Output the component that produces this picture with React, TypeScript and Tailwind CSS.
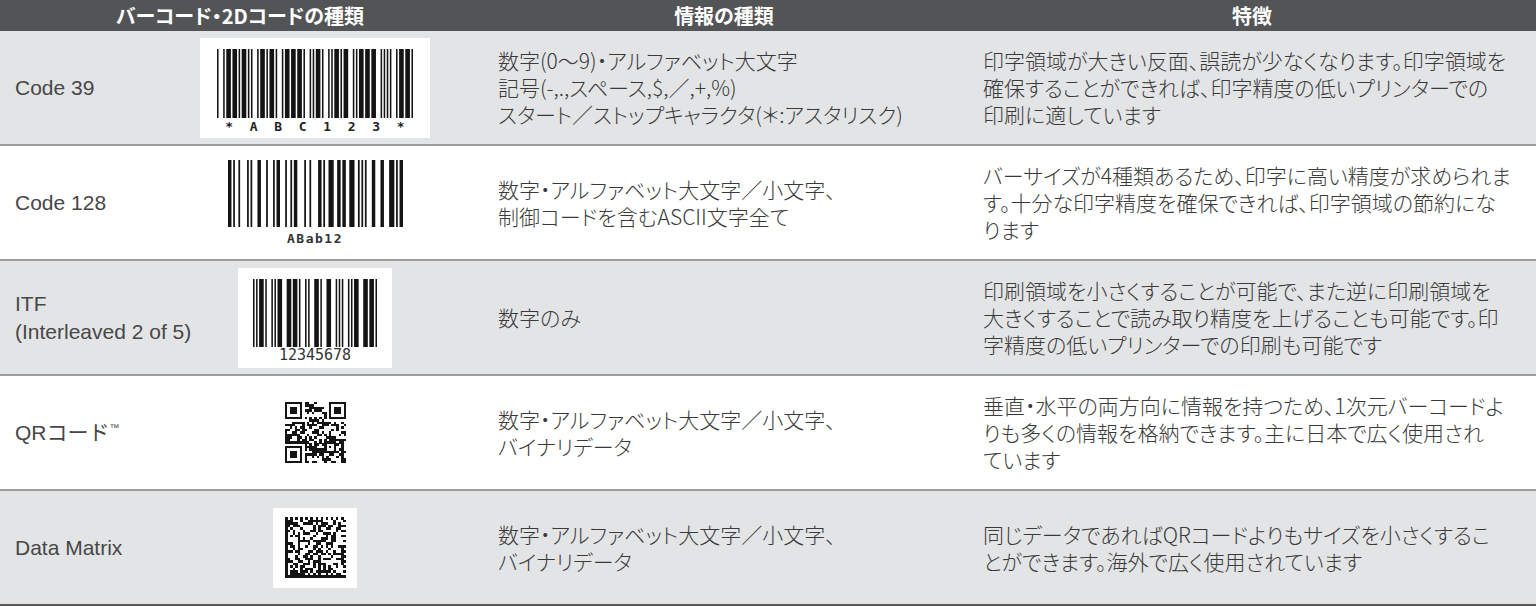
import React from "react";

const JP = "font-['Noto_Sans_CJK_JP',sans-serif] [font-feature-settings:'palt']";
const LABEL = "font-['Liberation_Sans','Noto_Sans_CJK_JP',sans-serif]";
const MONO = "font-['DejaVu_Sans_Mono',monospace]";

type Bar = { x: number; w: number };

// code 39: 1 = wide element, bar/space alternating, starting with a bar
const C39: Record<string, string> = {
  "*": "010010100",
  A: "100001001",
  B: "001001001",
  C: "101001000",
  "1": "100100001",
  "2": "001100001",
  "3": "101100000",
};

function code39(text: string) {
  const bars: Bar[] = [];
  let x = 0;
  text.split("").forEach((ch, ci) => {
    const p = C39[ch];
    for (let i = 0; i < 9; i++) {
      const w = p[i] === "1" ? 3 : 1;
      if (i % 2 === 0) bars.push({ x, w });
      x += w;
    }
    if (ci < text.length - 1) x += 1;
  });
  return { bars, total: x };
}

// code 128 set B: start, A, B, a, b, 1, 2, checksum(33), stop
const C128 = ["211214", "111323", "131123", "121124", "121421", "123221", "223211", "111323", "2331112"];

function fromWidths(list: string[]) {
  const bars: Bar[] = [];
  let x = 0;
  list.forEach((p) => {
    for (let i = 0; i < p.length; i++) {
      const w = Number(p[i]);
      if (i % 2 === 0) bars.push({ x, w });
      x += w;
    }
  });
  return { bars, total: x };
}

const ITF_D = ["nnwwn", "wnnnw", "nwnnw", "wwnnn", "nnwnw", "wnwnn", "nwwnn", "nnnww", "wnnwn", "nwnwn"];

function itf(digits: string) {
  const bars: Bar[] = [];
  let x = 0;
  const seq: [number, boolean][] = [];
  [1, 1, 1, 1].forEach((w, i) => seq.push([w, i % 2 === 0]));
  for (let i = 0; i < digits.length; i += 2) {
    const a = ITF_D[Number(digits[i])];
    const b = ITF_D[Number(digits[i + 1])];
    for (let k = 0; k < 5; k++) {
      seq.push([a[k] === "w" ? 3 : 1, true]);
      seq.push([b[k] === "w" ? 3 : 1, false]);
    }
  }
  seq.push([3, true], [1, false], [1, true]);
  seq.forEach(([w, isBar]) => {
    if (isBar) bars.push({ x, w });
    x += w;
  });
  return { bars, total: x };
}

function Bars({ data, w, h }: { data: { bars: Bar[]; total: number }; w: number; h: number }) {
  return (
    <svg width={w} height={h} viewBox={`0 0 ${data.total} 10`} preserveAspectRatio="none" className="block">
      {data.bars.map((b, i) => (
        <rect key={i} x={b.x} y={0} width={b.w} height={10} fill="#141414" />
      ))}
    </svg>
  );
}

function rng(seed: number) {
  let s = seed;
  return () => {
    s |= 0;
    s = (s + 0x6d2b79f5) | 0;
    let t = Math.imul(s ^ (s >>> 15), 1 | s);
    t = (t + Math.imul(t ^ (t >>> 7), 61 | t)) ^ t;
    return ((t ^ (t >>> 14)) >>> 0) / 4294967296;
  };
}

function qrCells() {
  const n = 25;
  const r = rng(7);
  const cells: boolean[][] = [];
  for (let y = 0; y < n; y++) {
    cells.push([]);
    for (let x = 0; x < n; x++) cells[y].push(r() > 0.52);
  }
  const finder = (ox: number, oy: number) => {
    for (let y = -1; y < 8; y++)
      for (let x = -1; x < 8; x++) {
        const cx = ox + x, cy = oy + y;
        if (cx < 0 || cy < 0 || cx >= n || cy >= n) continue;
        const edge = x === 0 || x === 6 || y === 0 || y === 6;
        const core = x >= 2 && x <= 4 && y >= 2 && y <= 4;
        cells[cy][cx] = x >= 0 && x <= 6 && y >= 0 && y <= 6 && (edge || core);
      }
  };
  finder(0, 0);
  finder(n - 7, 0);
  finder(0, n - 7);
  for (let i = 8; i < n - 8; i++) {
    cells[6][i] = i % 2 === 0;
    cells[i][6] = i % 2 === 0;
  }
  for (let y = 16; y < 21; y++)
    for (let x = 16; x < 21; x++) {
      const d = Math.max(Math.abs(x - 18), Math.abs(y - 18));
      cells[y][x] = d !== 1;
    }
  return cells;
}

function dmCells() {
  const n = 24;
  const r = rng(31);
  const cells: boolean[][] = [];
  for (let y = 0; y < n; y++) {
    cells.push([]);
    for (let x = 0; x < n; x++) {
      let v = r() > 0.5;
      if (x === 0 || y === n - 1) v = true;
      else if (y === 0) v = x % 2 === 0;
      else if (x === n - 1) v = y % 2 === 1;
      cells[y].push(v);
    }
  }
  return cells;
}

function Matrix({ cells, size }: { cells: boolean[][]; size: number }) {
  const n = cells.length;
  return (
    <svg width={size} height={size} viewBox={`0 0 ${n} ${n}`} className="block" shapeRendering="crispEdges">
      {cells.flatMap((row, y) =>
        row.map((on, x) => (on ? <rect key={`${x}-${y}`} x={x} y={y} width={1.02} height={1.02} fill="#141414" /> : null))
      )}
    </svg>
  );
}

function Code39Img() {
  const chars = "*ABC123*".split("");
  return (
    <div className="w-[230px] h-[100px] bg-white flex flex-col items-center pt-[11px]">
      <Bars data={code39("*ABC123*")} w={196} h={69} />
      <div className={`w-[196px] flex ${MONO} font-bold text-[13px] leading-[15px] text-[#222] mt-[1px]`}>
        {chars.map((c, i) => (
          <span key={i} className="flex-1 text-center">
            {c}
          </span>
        ))}
      </div>
    </div>
  );
}

function Code128Img() {
  return (
    <div className="flex flex-col items-center">
      <Bars data={fromWidths(C128)} w={175} h={67} />
      <div className={`${MONO} font-bold text-[13px] leading-[15px] tracking-[1.5px] text-[#333] mt-[4px]`}>ABab12</div>
    </div>
  );
}

function ItfImg() {
  return (
    <div className="w-[154px] h-[100px] bg-white flex flex-col items-center pt-[11px]">
      <Bars data={itf("12345678")} w={124} h={68} />
      <div className={`${MONO} text-[15px] leading-[16px] text-[#333]`}>12345678</div>
    </div>
  );
}

type Row = {
  label: React.ReactNode;
  img: React.ReactNode;
  info: string[];
  feat: string[];
  gray: boolean;
};

const rows: Row[] = [
  {
    label: "Code 39",
    img: <Code39Img />,
    info: ["数字(0〜9)・アルファベット大文字", "記号(-,.,スペース,$,／,+,%)", "スタート／ストップキャラクタ(＊:アスタリスク)"],
    feat: [
      "印字領域が大きい反面、誤読が少なくなります。印字領域を",
      "確保することができれば、印字精度の低いプリンターでの",
      "印刷に適しています",
    ],
    gray: true,
  },
  {
    label: "Code 128",
    img: <Code128Img />,
    info: ["数字・アルファベット大文字／小文字、", "制御コードを含むASCII文字全て"],
    feat: [
      "バーサイズが4種類あるため、印字に高い精度が求められま",
      "す。十分な印字精度を確保できれば、印字領域の節約にな",
      "ります",
    ],
    gray: false,
  },
  {
    label: (
      <>
        ITF
        <br />
        (Interleaved 2 of 5)
      </>
    ),
    img: <ItfImg />,
    info: ["数字のみ"],
    feat: [
      "印刷領域を小さくすることが可能で、また逆に印刷領域を",
      "大きくすることで読み取り精度を上げることも可能です。印",
      "字精度の低いプリンターでの印刷も可能です",
    ],
    gray: true,
  },
  {
    label: (
      <>
        QRコード<sup className="text-[10px] -top-[0.9em]">™</sup>
      </>
    ),
    img: <Matrix cells={qrCells()} size={61} />,
    info: ["数字・アルファベット大文字／小文字、", "バイナリデータ"],
    feat: [
      "垂直・水平の両方向に情報を持つため、1次元バーコードよ",
      "りも多くの情報を格納できます。主に日本で広く使用され",
      "ています",
    ],
    gray: false,
  },
  {
    label: "Data Matrix",
    img: (
      <div className="w-[84px] h-[80px] bg-white flex items-center justify-center">
        <Matrix cells={dmCells()} size={61} />
      </div>
    ),
    info: ["数字・アルファベット大文字／小文字、", "バイナリデータ"],
    feat: ["同じデータであればQRコードよりもサイズを小さくするこ", "とができます。海外で広く使用されています"],
    gray: true,
  },
];

export default function App() {
  return (
    <div className="w-[1536px] h-[609px] bg-white overflow-hidden">
      <div className={`grid grid-cols-[480px_488px_1fr] h-[31px] bg-[#535456] text-white font-bold text-[20px] items-center text-center ${JP}`}>
        <div>バーコード・2Dコードの種類</div>
        <div>情報の種類</div>
        <div>特徴</div>
      </div>
      {rows.map((r, i) => (
        <div
          key={i}
          className={`grid grid-cols-[150px_330px_488px_1fr] h-[115px] items-center border-b-2 ${
            i === rows.length - 1 ? "border-[#5a5a5a]" : "border-[#9c9c9c]"
          } ${r.gray ? "bg-[#e3e4e6]" : "bg-white"}`}
        >
          <div className={`pl-[15px] text-[21px] leading-[28px] text-[#474747] whitespace-nowrap ${LABEL}`}>{r.label}</div>
          <div className="flex justify-center">{r.img}</div>
          <div className={`pl-[18px] text-[21px] leading-[27px] font-light text-[#3a3a3a] whitespace-nowrap ${JP}`}>
            {r.info.map((t, k) => (
              <div key={k}>{t}</div>
            ))}
          </div>
          <div className={`pl-[15px] text-[21px] leading-[27px] font-light text-[#3a3a3a] whitespace-nowrap ${JP}`}>
            {r.feat.map((t, k) => (
              <div key={k}>{t}</div>
            ))}
          </div>
        </div>
      ))}
    </div>
  );
}
